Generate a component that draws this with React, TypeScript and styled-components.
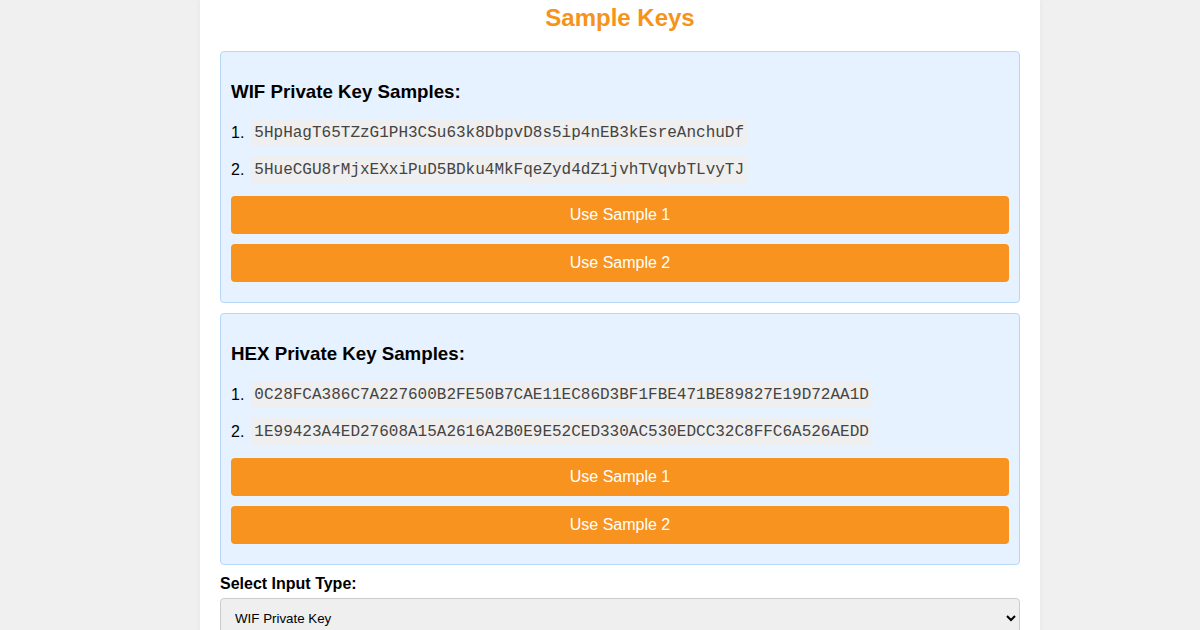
import styled, { createGlobalStyle } from "styled-components";

const GlobalStyle = createGlobalStyle`
  body {
    margin: 0;
    padding-left: 40px;
    background: #f0f0f0;
    font-family: "Liberation Sans", Arial, sans-serif;
    color: #000;
  }
`;

const sampleSets = [
  {
    title: "WIF Private Key Samples:",
    keys: [
      "5HpHagT65TZzG1PH3CSu63k8DbpvD8s5ip4nEB3kEsreAnchuDf",
      "5HueCGU8rMjxEXxiPuD5BDku4MkFqeZyd4dZ1jvhTVqvbTLvyTJ",
    ],
  },
  {
    title: "HEX Private Key Samples:",
    keys: [
      "0C28FCA386C7A227600B2FE50B7CAE11EC86D3BF1FBE471BE89827E19D72AA1D",
      "1E99423A4ED27608A15A2616A2B0E9E52CED330AC530EDCC32C8FFC6A526AEDD",
    ],
  },
];

export default function App() {
  return (
    <>
      <GlobalStyle />
      <Page>
        <Title>Sample Keys</Title>
        {sampleSets.map((set) => (
          <SampleBox key={set.title}>
            <BoxTitle>{set.title}</BoxTitle>
            <KeyList>
              {set.keys.map((k, i) => (
                <KeyItem key={k}>
                  <Num>{i + 1}.</Num>
                  <Code>{k}</Code>
                </KeyItem>
              ))}
            </KeyList>
            {set.keys.map((k, i) => (
              <SampleButton key={k}>Use Sample {i + 1}</SampleButton>
            ))}
          </SampleBox>
        ))}
        <Label htmlFor="input-type">Select Input Type:</Label>
        <Select id="input-type" defaultValue="wif">
          <option value="wif">WIF Private Key</option>
          <option value="hex">HEX Private Key</option>
        </Select>
      </Page>
    </>
  );
}

const Page = styled.div`
  width: 800px;
  margin: 0 auto;
  padding: 0 20px 20px;
  min-height: 700px;
  background: #fff;
  box-shadow: 0 0 6px rgba(0, 0, 0, 0.05);
`;

const Title = styled.h2`
  margin: 0;
  padding: 4px 0 19px;
  text-align: center;
  color: #f7931a;
  font-size: 24px;
  line-height: 28px;
`;

const SampleBox = styled.div`
  margin-bottom: 10px;
  padding: 10px;
  background: #e6f2ff;
  border: 1px solid #b8d8f8;
  border-radius: 4px;
`;

const BoxTitle = styled.h3`
  margin: 19px 0 16px;
  font-size: 18.72px;
  line-height: 22px;
`;

const KeyList = styled.ol`
  list-style: none;
  margin: 0 0 13px;
  padding: 0;
`;

const KeyItem = styled.li`
  display: flex;
  align-items: center;
  gap: 7px;
  margin-bottom: 10px;
  font-size: 16px;
`;

const Num = styled.span`
  font-size: 16px;
`;

const Code = styled.code`
  display: inline-block;
  padding: 5px 3px 4px;
  background: #efefef;
  font-family: "Liberation Mono", "Courier New", monospace;
  font-size: 16px;
  line-height: 18px;
  color: #444;
`;

const SampleButton = styled.button`
  display: block;
  width: 100%;
  height: 38px;
  margin: 0 0 10px;
  border: none;
  border-radius: 4px;
  background: #f7931e;
  color: #fff;
  font-family: "Liberation Sans", Arial, sans-serif;
  font-size: 16px;
  cursor: pointer;
`;

const Label = styled.label`
  display: block;
  margin: 10px 0 5px;
  font-weight: bold;
  font-size: 16px;
  line-height: 18px;
`;

const Select = styled.select`
  display: block;
  width: 100%;
  height: 40px;
  padding: 0 10px;
  background: #efefef;
  border: 1px solid #ccc;
  border-radius: 4px;
  font-family: "Liberation Sans", Arial, sans-serif;
  font-size: 13.33px;
  color: #000;
`;
